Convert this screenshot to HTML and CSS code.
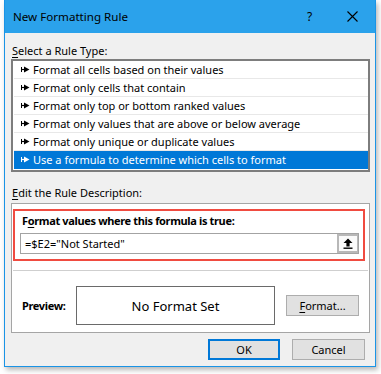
FILE: index.html
```html
<!DOCTYPE html>
<html>
<head>
<meta charset="utf-8">
<link rel="stylesheet" href="styles.css">
</head>
<body>
<div class="window">
  <div class="titlebar">
    <span class="title">New Formatting Rule</span>
    <span class="help">?</span>
    <svg class="close" width="11" height="11" viewBox="0 0 11 11"><path d="M0.5 0.5 L10.5 10.5 M10.5 0.5 L0.5 10.5" stroke="#000" stroke-width="1.1" fill="none"/></svg>
  </div>
  <div class="content">
    <div class="label first"><u>S</u>elect a Rule Type:</div>
    <div class="list">
      <div class="item"><svg class="arr" width="9" height="7" viewBox="0 0 9 7"><path d="M0.5 1 V6" stroke="currentColor" stroke-width="1"/><path d="M0 3.5 H4" stroke="currentColor" stroke-width="1.2"/><path d="M3 0.5 L8.5 3.5 L3 6.5 Z" fill="currentColor"/></svg>Format all cells based on their values</div>
      <div class="item"><svg class="arr" width="9" height="7" viewBox="0 0 9 7"><path d="M0.5 1 V6" stroke="currentColor" stroke-width="1"/><path d="M0 3.5 H4" stroke="currentColor" stroke-width="1.2"/><path d="M3 0.5 L8.5 3.5 L3 6.5 Z" fill="currentColor"/></svg>Format only cells that contain</div>
      <div class="item"><svg class="arr" width="9" height="7" viewBox="0 0 9 7"><path d="M0.5 1 V6" stroke="currentColor" stroke-width="1"/><path d="M0 3.5 H4" stroke="currentColor" stroke-width="1.2"/><path d="M3 0.5 L8.5 3.5 L3 6.5 Z" fill="currentColor"/></svg>Format only top or bottom ranked values</div>
      <div class="item"><svg class="arr" width="9" height="7" viewBox="0 0 9 7"><path d="M0.5 1 V6" stroke="currentColor" stroke-width="1"/><path d="M0 3.5 H4" stroke="currentColor" stroke-width="1.2"/><path d="M3 0.5 L8.5 3.5 L3 6.5 Z" fill="currentColor"/></svg>Format only values that are above or below average</div>
      <div class="item"><svg class="arr" width="9" height="7" viewBox="0 0 9 7"><path d="M0.5 1 V6" stroke="currentColor" stroke-width="1"/><path d="M0 3.5 H4" stroke="currentColor" stroke-width="1.2"/><path d="M3 0.5 L8.5 3.5 L3 6.5 Z" fill="currentColor"/></svg>Format only unique or duplicate values</div>
      <div class="item selected"><svg class="arr" width="9" height="7" viewBox="0 0 9 7"><path d="M0.5 1 V6" stroke="currentColor" stroke-width="1"/><path d="M0 3.5 H4" stroke="currentColor" stroke-width="1.2"/><path d="M3 0.5 L8.5 3.5 L3 6.5 Z" fill="currentColor"/></svg>Use a formula to determine which cells to format</div>
    </div>
    <div class="label second"><u>E</u>dit the Rule Description:</div>
    <div class="group">
      <div class="highlight">
        <div class="boldlabel">F<u>o</u>rmat values where this formula is true:</div>
        <div class="input">
          <span class="formula">=$E2="Not Started"</span>
          <span class="refbtn"><svg width="10" height="11" viewBox="0 0 10 11"><path d="M5 0.5 L9.5 5 H6.6 V8.5 H3.4 V5 H0.5 Z" fill="#000"/><path d="M0.5 10.2 H9.5" stroke="#000" stroke-width="1.4"/></svg></span>
        </div>
      </div>
      <div class="sep"></div>
      <div class="preview-row">
        <span class="boldlabel pv">Preview:</span>
        <div class="preview">No Format Set</div>
        <div class="btn fmt"><u>F</u>ormat...</div>
      </div>
    </div>
    <div class="buttons">
      <div class="btn ok">OK</div>
      <div class="btn cancel">Cancel</div>
    </div>
  </div>
</div>
</body>
</html>
```

FILE: styles.css
```css
html, body {
  margin: 0;
  padding: 0;
  background: #ffffff;
}
body {
  width: 381px;
  height: 374px;
  overflow: hidden;
  font-family: "Noto Sans", "Liberation Sans", sans-serif;
  font-size: 11px;
  color: #000;
}
.window {
  margin-left: 4px;
  width: 370px;
  height: 366px;
  border: 1px solid #1a94e6;
  border-top: none;
  background: #f0f0f0;
  box-shadow: 2px 3px 5px rgba(0,0,0,0.28);
}
.titlebar {
  height: 33px;
  background: #2ba2eb;
  display: flex;
  align-items: center;
  padding-left: 8px;
}
.title {
  font-size: 11.6px;
  flex: 1;
  padding-bottom: 1px;
}
.help {
  font-size: 12px;
  width: 40px;
  padding-bottom: 1px;
}
.close {
  margin-right: 17px;
  margin-bottom: 1px;
}
.content {
  padding: 0 5px 0 6px;
}
.label {
  line-height: 16px;
  height: 16px;
  padding-left: 1px;
}
.label.first { padding-top: 10px; }
.label.second { margin-top: 13px; }
u { text-decoration-thickness: 1px; text-underline-offset: 2px; }
.list {
  margin-top: 0;
  background: #fff;
  border: 2px solid #7d7d7d;
  padding: 0 0 1px 1px;
}
.item {
  height: 17px;
  line-height: 17px;
  border-bottom: 1px solid #e8e8e8;
  display: flex;
  align-items: center;
  padding-left: 7px;
  white-space: nowrap;
}
.item.selected {
  background: #0078d7;
  color: #fff;
  border-bottom-color: #0078d7;
}
.arr {
  margin-right: 3px;
  flex: none;
}
.group {
  margin-top: 2px;
  background: #fff;
  border: 1px solid #a5a5a5;
  height: 128px;
}
.highlight {
  margin: 5px 4px 0 1px;
  border: 2px solid #f04b40;
  padding: 2px 4px 5px 5px;
}
.boldlabel {
  font-weight: bold;
  line-height: 16px;
  padding-left: 2px;
  letter-spacing: -0.35px;
}
.input {
  margin-top: 4px;
  height: 19px;
  border: 1px solid #a3a3a3;
  display: flex;
  align-items: center;
}
.formula {
  flex: 1;
  padding-left: 4px;
}
.refbtn {
  border: 2px solid #b8b8b8;
  border-right-width: 1px;
  box-sizing: border-box;
  width: 21px;
  height: 19px;
  display: flex;
  align-items: center;
  justify-content: center;
  background: #fafafa;
}
.sep {
  margin: 9px 1px 0 1px;
  height: 1px;
  background: #cfcfcf;
}
.preview-row {
  display: flex;
  align-items: center;
  margin-top: 15px;
  padding-left: 9px;
}
.pv {
  width: 54px;
  padding-left: 1px;
}
.preview {
  width: 197px;
  height: 37px;
  border: 1px solid #6a6a6a;
  display: flex;
  align-items: center;
  justify-content: center;
  font-size: 13px;
  background: #fff;
}
.btn {
  box-sizing: border-box;
  height: 21px;
  background: #e1e1e1;
  border: 1px solid #adadad;
  display: flex;
  align-items: center;
  justify-content: center;
}
.fmt {
  width: 73px;
  margin-left: 11px;
}
.buttons {
  display: flex;
  justify-content: flex-end;
  margin-top: 6px;
  padding-right: 5px;
}
.ok {
  width: 72px;
  border: 2px solid #0078d7;
}
.cancel {
  width: 73px;
  margin-left: 12px;
}
```
